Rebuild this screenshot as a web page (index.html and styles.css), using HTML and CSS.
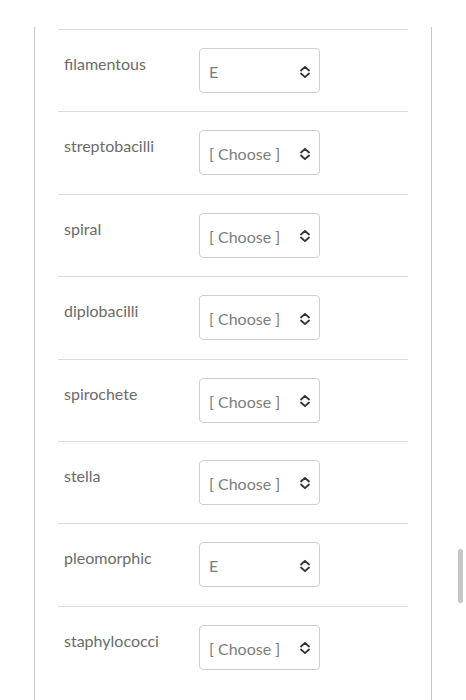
FILE: index.html
```html
<!DOCTYPE html>
<html>
<head>
<meta charset="utf-8">
<link rel="stylesheet" href="styles.css">
</head>
<body>
<div class="page">
  <div class="card">
    <div class="row"><div class="label">filamentous</div><div class="select"><span class="val">E</span><svg class="chev" viewBox="0 0 12 14" width="12" height="14"><path d="M2 5.5 L6 1.8 L10 5.5 M2 8.5 L6 12.2 L10 8.5" fill="none" stroke="#333" stroke-width="1.8" stroke-linecap="round" stroke-linejoin="round"/></svg></div></div>
    <div class="row"><div class="label">streptobacilli</div><div class="select"><span class="val">[ Choose ]</span><svg class="chev" viewBox="0 0 12 14" width="12" height="14"><path d="M2 5.5 L6 1.8 L10 5.5 M2 8.5 L6 12.2 L10 8.5" fill="none" stroke="#333" stroke-width="1.8" stroke-linecap="round" stroke-linejoin="round"/></svg></div></div>
    <div class="row"><div class="label">spiral</div><div class="select"><span class="val">[ Choose ]</span><svg class="chev" viewBox="0 0 12 14" width="12" height="14"><path d="M2 5.5 L6 1.8 L10 5.5 M2 8.5 L6 12.2 L10 8.5" fill="none" stroke="#333" stroke-width="1.8" stroke-linecap="round" stroke-linejoin="round"/></svg></div></div>
    <div class="row"><div class="label">diplobacilli</div><div class="select"><span class="val">[ Choose ]</span><svg class="chev" viewBox="0 0 12 14" width="12" height="14"><path d="M2 5.5 L6 1.8 L10 5.5 M2 8.5 L6 12.2 L10 8.5" fill="none" stroke="#333" stroke-width="1.8" stroke-linecap="round" stroke-linejoin="round"/></svg></div></div>
    <div class="row"><div class="label">spirochete</div><div class="select"><span class="val">[ Choose ]</span><svg class="chev" viewBox="0 0 12 14" width="12" height="14"><path d="M2 5.5 L6 1.8 L10 5.5 M2 8.5 L6 12.2 L10 8.5" fill="none" stroke="#333" stroke-width="1.8" stroke-linecap="round" stroke-linejoin="round"/></svg></div></div>
    <div class="row"><div class="label">stella</div><div class="select"><span class="val">[ Choose ]</span><svg class="chev" viewBox="0 0 12 14" width="12" height="14"><path d="M2 5.5 L6 1.8 L10 5.5 M2 8.5 L6 12.2 L10 8.5" fill="none" stroke="#333" stroke-width="1.8" stroke-linecap="round" stroke-linejoin="round"/></svg></div></div>
    <div class="row"><div class="label">pleomorphic</div><div class="select"><span class="val">E</span><svg class="chev" viewBox="0 0 12 14" width="12" height="14"><path d="M2 5.5 L6 1.8 L10 5.5 M2 8.5 L6 12.2 L10 8.5" fill="none" stroke="#333" stroke-width="1.8" stroke-linecap="round" stroke-linejoin="round"/></svg></div></div>
    <div class="row"><div class="label">staphylococci</div><div class="select"><span class="val">[ Choose ]</span><svg class="chev" viewBox="0 0 12 14" width="12" height="14"><path d="M2 5.5 L6 1.8 L10 5.5 M2 8.5 L6 12.2 L10 8.5" fill="none" stroke="#333" stroke-width="1.8" stroke-linecap="round" stroke-linejoin="round"/></svg></div></div>
  </div>
  <div class="scroll-thumb"></div>
</div>
</body>
</html>
```
FILE: styles.css
```css
html, body {
  margin: 0;
  padding: 0;
  background: #fff;
}
body {
  font-family: Lato, "Liberation Sans", sans-serif;
  height: 700px;
  overflow: hidden;
}
.page {
  position: relative;
  padding-top: 27px;
  height: 673px;
}
.card {
  margin-left: 34px;
  width: 398px;
  height: 700px;
  border-left: 1.5px solid #c9c9c9;
  border-right: 1.5px solid #c9c9c9;
  padding: 2px 23px 0 23px;
  box-sizing: border-box;
}
.row {
  display: flex;
  align-items: flex-start;
  border-top: 1px solid #dcdcdc;
  height: 82.4px;
  box-sizing: border-box;
  padding-top: 18px;
}
.label {
  width: 135px;
  padding-left: 6px;
  padding-top: 5px;
  font-size: 16px;
  line-height: 22px;
  color: #6b6b6b;
}
.select {
  width: 121px;
  height: 45px;
  box-sizing: border-box;
  border: 1px solid #cfcfcf;
  border-radius: 4px;
  display: flex;
  align-items: center;
  justify-content: space-between;
  padding: 2px 8px 0 9px;
  font-size: 16px;
  color: #7d7d7d;
}
.chev {
  display: block;
}
.scroll-thumb {
  position: absolute;
  left: 458px;
  top: 549px;
  width: 5px;
  height: 54px;
  border-radius: 3px;
  background: #c6c6c6;
}
```
